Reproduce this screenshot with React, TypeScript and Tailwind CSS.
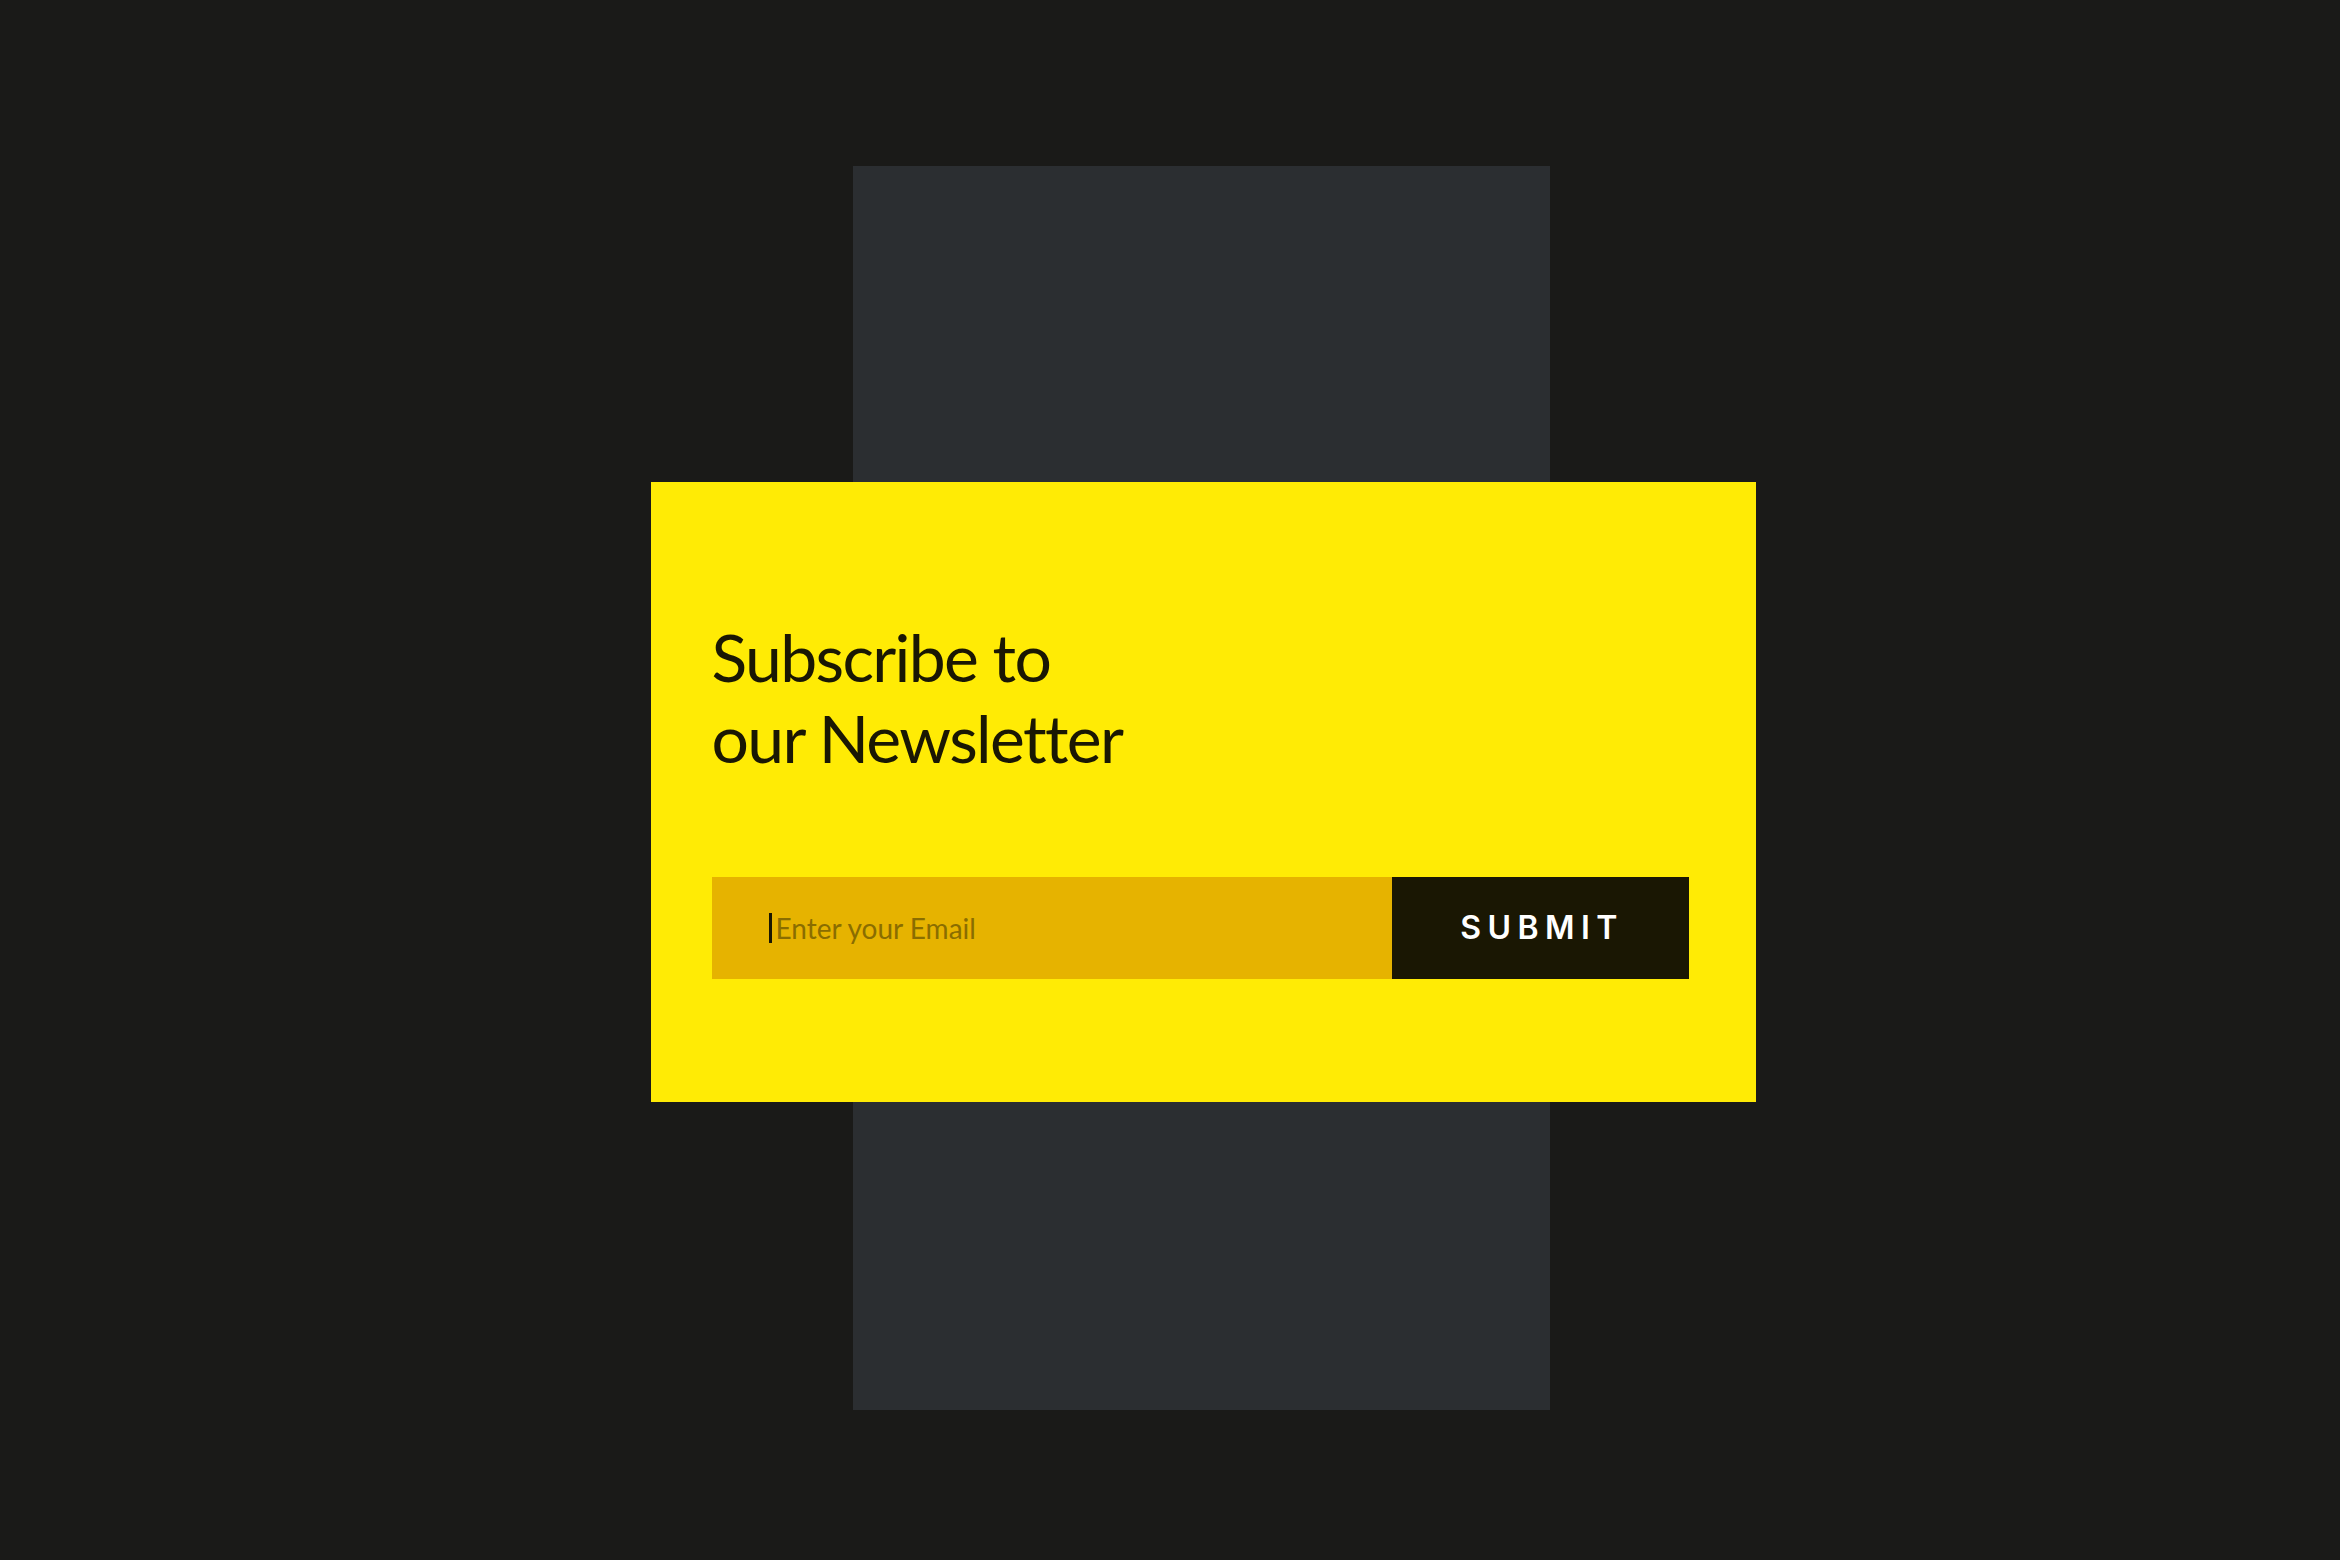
import React, { useState } from "react";

const App: React.FC = () => {
  const [email, setEmail] = useState("");

  return (
    <div className="min-h-screen w-full bg-[#1a1a18] flex items-center justify-center pl-[62px] pt-[16px]">
      <div className="grid place-items-center">
        <div className="col-start-1 row-start-1 w-[697px] h-[1244px] bg-[#2b2e31]" />

        <div className="col-start-1 row-start-1 mt-[8px] ml-[4px] w-[1105px] h-[620px] bg-[#ffeb05] flex flex-col pl-[61px] pr-[67px] pt-[134px]">
          <h1
            className="text-[66px] leading-[81px] text-[#1a1703] font-normal tracking-[-0.025em]"
            style={{ fontFamily: "Lato, 'Open Sans', sans-serif" }}
          >
            Subscribe to
            <br />
            our Newsletter
          </h1>

          <form className="flex mt-[99px] h-[102px]" onSubmit={(e) => e.preventDefault()}>
            <label className="flex-1 h-full bg-[#e6b300] flex items-center pl-[57px]">
              <span className="w-[3px] h-[30px] bg-[#1a1703] mr-[4px] shrink-0" />
              <input
                type="email"
                value={email}
                onChange={(e) => setEmail(e.target.value)}
                placeholder="Enter your Email"
                className="flex-1 h-full bg-transparent text-[28px] text-[#1a1703] placeholder:text-[#8a6d00] caret-transparent outline-none"
                style={{ fontFamily: "Lato, 'Open Sans', sans-serif" }}
              />
            </label>
            <button
              type="submit"
              className="w-[297px] h-full bg-[#1a1703] text-white text-[32px] font-semibold tracking-[0.2em] pl-[4px]"
              style={{ fontFamily: "Inter, 'Open Sans', sans-serif" }}
            >
              SUBMIT
            </button>
          </form>
        </div>
      </div>
    </div>
  );
};

export default App;
